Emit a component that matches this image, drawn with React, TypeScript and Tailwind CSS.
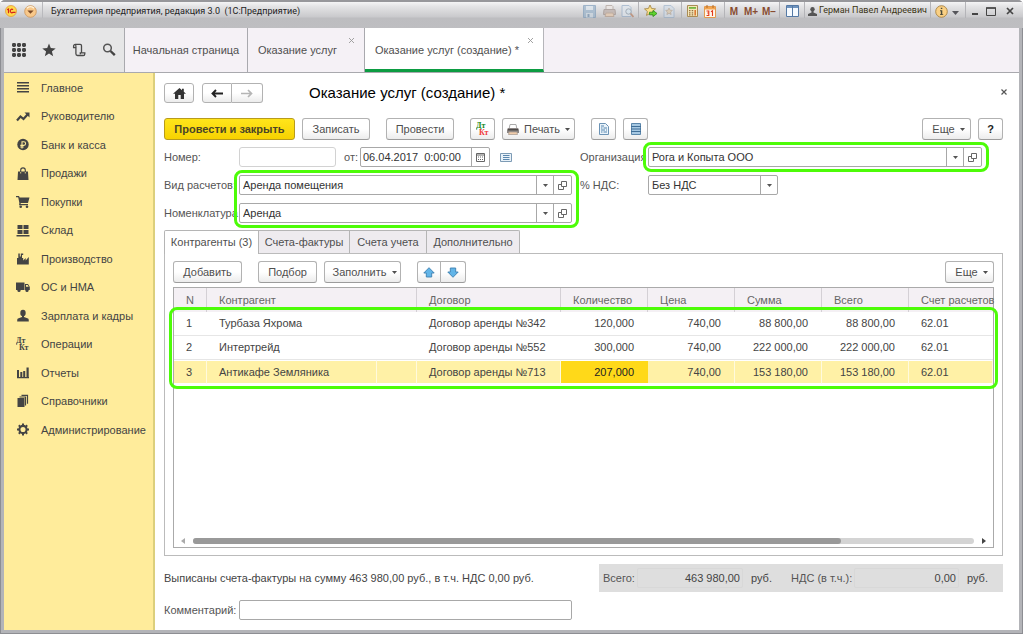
import type { ReactNode } from "react";

function Caret({ className = "" }: { className?: string }) {
  return (
    <svg className={className} width="5" height="3" viewBox="0 0 5 3" fill="currentColor" aria-hidden="true">
      <path d="M0 0h5L2.5 3z" />
    </svg>
  );
}

function Sep() {
  return <span className="mx-[3px] h-4 w-px shrink-0 self-start bg-[#b4b4b8]" />;
}

function TitleButton({ label, width, children }: { label: string; width: string; children: ReactNode }) {
  return (
    <button type="button" aria-label={label} className={`flex h-[18px] shrink-0 items-center justify-center ${width}`}>
      {children}
    </button>
  );
}

const titleFont = "font-[Roboto,sans-serif] text-[9px]";

function TitleBar() {
  return (
    <header className="flex h-7 items-start border-t-2 border-[#97979b] bg-[linear-gradient(to_bottom,#f4f4f5_0px,#e2e2e4_5px,#c9c9cc_15px,#bdbdc0_16px,#bebec1_26px)] pl-1 text-[#222]">
      <TitleButton label="1С" width="w-[14px]">
        <svg width="12" height="12" viewBox="0 0 12 12">
          <circle cx="6" cy="6" r="5.5" fill="#ffd94a" stroke="#e39a3c" strokeWidth="0.8" />
          <path d="M2.2 4.8 3.5 4v4.3M8 4.7A1.7 1.7 0 1 0 8 7.3h2.5" fill="none" stroke="#d4231c" strokeWidth="1.2" />
        </svg>
      </TitleButton>
      <TitleButton label="Главное меню" width="w-[24px]">
        <svg width="13" height="13" viewBox="0 0 13 13">
          <circle cx="6.5" cy="6.5" r="5.8" fill="#f8c88a" stroke="#cf9a62" strokeWidth="0.9" />
          <path d="M3 3.2a5 5 0 0 1 7 0" stroke="#fff3dc" strokeWidth="1.6" fill="none" />
          <path d="M3.4 5.4h6.2L6.5 8.8z" fill="#7a4a28" />
        </svg>
      </TitleButton>
      <span className="h-4 w-px bg-[#b9b9bd]" />
      <span className={`ml-2 whitespace-pre leading-[18px] ${titleFont}`}>Бухгалтерия предприятия, редакция 3.0  (1С:Предприятие)</span>
      <div className="ml-auto flex items-start">
        <TitleButton label="Сохранить" width="w-[20px]">
          <svg width="13" height="13" viewBox="0 0 13 13" opacity="0.6">
            <path d="M.5.5h12v12h-12z" fill="#8eacc8" stroke="#7093b5" />
            <path d="M3 1h7v4H3z" fill="#dbe6ef" />
            <path d="M3 8h7v4.500H3z" fill="#c8d6e2" />
            <path d="M4.500 9h2v3h-2z" fill="#6587a8" />
          </svg>
        </TitleButton>
        <TitleButton label="Печать" width="w-[20px]">
          <svg width="13" height="12" viewBox="0 0 13 12" opacity="0.65">
            <path d="M3 .5h6l1 1V5H3z" fill="#eee7e2" stroke="#a99b93" />
            <path d="M1 4.500h11l.5 5H.5z" fill="#b9aaa4" stroke="#998a84" />
            <path d="M3 8h7l1 3.500H2z" fill="#e7c6a8" stroke="#b39884" />
          </svg>
        </TitleButton>
        <TitleButton label="Просмотр" width="w-[16px]">
          <svg width="13" height="13" viewBox="0 0 13 13" opacity="0.6">
            <path d="M1 .5h7l2 2v9H1z" fill="#dfe7ef" stroke="#8ba6c4" />
            <circle cx="7.500" cy="6.500" r="2.700" fill="#d5e6f2" stroke="#7f90a0" />
            <path d="m9.500 8.500 3 3.500" stroke="#b2714d" strokeWidth="1.800" />
          </svg>
        </TitleButton>
        <Sep />
        <TitleButton label="Добавить в избранное" width="w-[18px]">
          <svg width="14" height="14" viewBox="0 0 14 14">
            <path d="m6 1 1.600 3.500 3.900.4-2.900 2.600.9 3.900L6 9.400l-3.500 2 .9-3.900L.5 4.900l3.900-.4z" fill="#fbe08a" stroke="#a88b4c" strokeWidth="0.900" />
            <path d="M5.500 8.200h3.500V6.400L13 9.500 9 12.600v-1.800H5.500z" fill="#5fd32e" stroke="#2c8a19" strokeWidth="0.800" />
          </svg>
        </TitleButton>
        <TitleButton label="Избранное" width="w-[18px]">
          <svg width="12" height="13" viewBox="0 0 12 13" opacity="0.55">
            <path d="M1 .5h7l3 3v9H1z" fill="#cfdbe7" stroke="#8ba6c4" />
            <path d="m6 3 1 2.200 2.400.2-1.800 1.700.5 2.400L6 8.300 3.900 9.500l.5-2.400L2.600 5.400 5 5.200z" fill="#d7c09a" stroke="#9a836a" strokeWidth="0.700" />
          </svg>
        </TitleButton>
        <Sep />
        <TitleButton label="Калькулятор" width="w-[14px]">
          <svg width="11" height="12" viewBox="0 0 11 12">
            <path d="M.5.5h10v11H.5z" fill="#f6e6b8" stroke="#a98c55" />
            <path d="M2 2h7v1.800H2z" fill="#74b843" />
            <path d="M2 5h1.500v1.300H2zm2.700 0h1.500v1.300H4.700zM2 7.200h1.500v1.300H2zm2.700 0h1.500v1.300H4.700zM2 9.300h1.500v1.200H2zm2.700 0h1.500v1.200H4.700z" fill="#93703f" />
            <path d="M7.400 5H9v5.500H7.400z" fill="#db7a35" />
          </svg>
        </TitleButton>
        <TitleButton label="Календарь" width="w-[22px]">
          <svg width="12" height="13" viewBox="0 0 12 13">
            <path d="M.5 1.500h11v11H.5z" fill="#fff6e8" stroke="#e29a4e" />
            <path d="M1 2h10v2.500H1z" fill="#f2a550" />
            <path d="M3 0v3M9 0v3" stroke="#b66a20" />
            <path d="M2.500 6h2.300v2H3.300h1.500v2.500H2.500M7 6.700l1.500-.9v5.200" fill="none" stroke="#e23b1d" strokeWidth="1.100" />
          </svg>
        </TitleButton>
        <Sep />
        <button type="button" className="h-[18px] w-[12px] text-[10px] font-bold text-[#884c30]">M</button>
        <button type="button" className="h-[18px] w-[22px] text-[10px] font-bold text-[#884c30]">M+</button>
        <button type="button" className="h-[18px] w-[14px] text-[10px] font-bold text-[#884c30]">M−</button>
        <Sep />
        <TitleButton label="Окна" width="w-[18px]">
          <svg width="13" height="12" viewBox="0 0 13 12">
            <path d="M.5.5h12v11H.5z" fill="#f5faff" stroke="#5479a5" />
            <path d="M1 1h11v2H1z" fill="#6f93bd" />
            <path d="M6.500 1v10.500" stroke="#5479a5" />
          </svg>
        </TitleButton>
        <Sep />
        <button type="button" className={`flex h-[18px] items-center gap-[2px] whitespace-nowrap text-[#3b3414] ${titleFont}`}>
          <svg width="9" height="9" viewBox="0 0 9 9" fill="#555">
            <circle cx="4.500" cy="2.300" r="2.200" />
            <path d="M3.500 4h2v1.500L9 7v2H0V7l3.500-1.500z" />
          </svg>
          Герман Павел Андреевич
        </button>
        <Sep />
        <TitleButton label="Справка" width="w-[14px]">
          <svg width="13" height="13" viewBox="0 0 13 13">
            <circle cx="6.500" cy="6.500" r="5.800" fill="#fad084" stroke="#a8813e" strokeWidth="0.900" />
            <path d="M5.800 2.700h1.500v1.400H5.800zM5 5.200h2.300v4h.9v.9H5v-.9h.8v-3H5z" fill="#4b4b3a" />
          </svg>
        </TitleButton>
        <TitleButton label="Ещё команды" width="w-[14px]">
          <svg className="mt-1" width="7" height="4" viewBox="0 0 7 4" fill="#55555a"><path d="M0 0h7L3.500 4z" /></svg>
        </TitleButton>
        <Sep />
        <TitleButton label="Свернуть" width="w-[12px]">
          <svg width="9" height="10" viewBox="0 0 9 10"><path d="M1 8h6" stroke="#444" strokeWidth="2" /></svg>
        </TitleButton>
        <TitleButton label="Развернуть" width="w-[20px]">
          <svg width="10" height="9" viewBox="0 0 10 9"><path d="M.5 1h9v7.500h-9z" fill="none" stroke="#444" /><path d="M0 1h10" stroke="#444" strokeWidth="1.500" /></svg>
        </TitleButton>
        <TitleButton label="Закрыть окно" width="w-[22px]">
          <svg className="mr-1" width="8" height="8" viewBox="0 0 8 8"><path d="m1 1 6 6M7 1 1 7" stroke="#444" strokeWidth="1.700" /></svg>
        </TitleButton>
      </div>
    </header>
  );
}

function Tool({ label, children }: { label: string; children: ReactNode }) {
  return (
    <button type="button" aria-label={label} className="flex h-full w-[30px] items-center justify-center">
      <svg width="14" height="14" viewBox="0 0 14 14" fill="#444" aria-hidden="true">{children}</svg>
    </button>
  );
}

function WindowTabs() {
  return (
    <div className="flex h-[45px] border-b border-[#a9a9ae] bg-[#f5f1f6]">
      <div className="flex h-full w-[120px] bg-[#e6e6e7]">
        <Tool label="Разделы">
          {[2, 7, 12].map((y) => [2, 7, 12].map((x) => <rect key={`${x}-${y}`} x={x - 2} y={y - 2} width="4" height="4" rx="1.4" />))}
        </Tool>
        <Tool label="Избранное">
          <path d="m7 .5 1.800 4.600 4.900.3-3.800 3.100 1.300 4.800L7 10.600l-4.200 2.700 1.300-4.800L.3 5.400l4.900-.3z" />
        </Tool>
        <Tool label="История">
          <path d="M4 4.600H1.600V3.200c0-1.200.7-1.800 1.700-1.800h4.900c.9 0 1.300.6 1.300 1.400v7M3.900 4.600v6.200c0 1.100.6 1.700 1.600 1.700h5.700c1 0 1.600-.6 1.600-1.600v-1H8.300v1.300M3.300 1.500c.6.300.7 1.200.7 3.100" fill="none" stroke="#4a4a4a" strokeWidth="1.300" />
        </Tool>
        <Tool label="Поиск">
          <circle cx="5.500" cy="5" r="3.800" fill="none" stroke="#555" strokeWidth="1.500" />
          <path d="m8.500 8 4.300 4.200" stroke="#444" strokeWidth="2.400" />
        </Tool>
      </div>
      <button type="button" className="w-[124px] border-x border-[#a9a9ae] text-[11px] text-[#4f4f4f]">Начальная страница</button>
      <div className="relative flex w-[117px] border-r border-[#a9a9ae]">
        <button type="button" className="grow pl-[10px] text-left text-[11px] text-[#4f4f4f]">Оказание услуг</button>
        <CloseMark />
      </div>
      <div className="relative flex w-[179px] border-r border-[#b5b5b9] border-b-[3px] border-b-[#0c9c42] bg-white">
        <button type="button" className="grow pl-[10px] pt-[3px] text-left text-[11px] text-[#4f4f4f]">Оказание услуг (создание) *</button>
        <CloseMark />
      </div>
    </div>
  );
}

function CloseMark() {
  return (
    <button type="button" aria-label="Закрыть вкладку" className="absolute right-[9px] top-[9px] p-px">
      <svg width="5" height="5" viewBox="0 0 5 5"><path d="m0 0 5 5M5 0 0 5" stroke="#999" strokeWidth="0.900" /></svg>
    </button>
  );
}

const sections: { name: string; icon: ReactNode }[] = [
  { name: "Главное", icon: <path d="M1 1h12v1.500H1zm0 3h12v1.500H1zm0 3h12v1.500H1zm0 3h12v1.500H1z" /> },
  { name: "Руководителю", icon: <><path d="m1 10.500 3.500-4 3 2.500 4-4.500" fill="none" stroke="#444" strokeWidth="2.200" /><path d="M8.500 2.500h5v5z" /></> },
  {
    name: "Банк и касса",
    icon: <><circle cx="7" cy="6.500" r="5.700" /><path d="M6 10.500V3.800h1.800a1.700 1.700 0 0 1 0 3.600H4.300M4.300 9h3.400" fill="none" stroke="#ffec9b" strokeWidth="1.100" /></>,
  },
  { name: "Продажи", icon: <><path d="M2 4.500h10l.5 8.500h-11z" /><path d="M4.700 6V3.200a2.300 2.300 0 0 1 4.600 0V6" fill="none" stroke="#444" strokeWidth="1.100" /><path d="M4.700 5v1.500M9.300 5v1.500" stroke="#ffec9b" strokeWidth="0.800" /></> },
  { name: "Покупки", icon: <><path d="M0 1h3l.7 1.500h9.800L12 8H4.800l-.3 1H12v1.300H3L3.400 8 2.200 2.300H0z" /><circle cx="4.700" cy="11.700" r="1.300" /><circle cx="11" cy="11.700" r="1.300" /></> },
  { name: "Склад", icon: <path d="M1.500 1h5v4h-5zm6 0h5v4h-5zm-6 5h5v4h-5zm6 0h5v4h-5zM.5 11h13v1.500H.5z" /> },
  { name: "Производство", icon: <path d="M1 12.500V6h1.300V1.500h1.500v3h1v-3h2.400V3H6v3h1.200v2.500L9.700 6v2.500L12.800 5v7.500z" /> },
  { name: "ОС и НМА", icon: <><path d="M0 2.500h8.500V10H0zM9 4h3l1.800 3v3H9z" /><path d="M10 5h1.700l1 1.800H10z" fill="#ffec9b" /><circle cx="3" cy="10.500" r="1.600" /><circle cx="11" cy="10.500" r="1.600" /></> },
  { name: "Зарплата и кадры", icon: <><ellipse cx="7" cy="4" rx="2.700" ry="3.200" /><path d="M6 6h2v2l4 1.500c.6.300.8 1 .8 3H1.200c0-2 .2-2.700.8-3L6 8z" /></> },
  {
    name: "Операции",
    icon: <><text x="0" y="6" fontSize="8" fontWeight="bold" fontFamily="Liberation Serif, serif">Дт</text><text x="3" y="13" fontSize="8" fontWeight="bold" fontFamily="Liberation Serif, serif">Кт</text></>,
  },
  { name: "Отчеты", icon: <path d="M1 4h2v7H1zm3.300 2h2v5h-2zm2.900-1h2v6h-2zM10.500 1.500h2.200V11h-2.200zM1 11h12v1.200H1z" /> },
  { name: "Справочники", icon: <><path d="M1.500 4h7v9h-7z" /><path d="M3.500 3h6v8.500M5.500 1.300h6v8.500" fill="none" stroke="#444" strokeWidth="1.200" /></> },
  {
    name: "Администрирование",
    icon: <><circle cx="7" cy="6.500" r="3.600" fill="none" stroke="#444" strokeWidth="2.100" /><path d="M7 .5v2M7 10.500v2M1 6.500h2M11 6.500h2M2.800 2.300l1.300 1.300M9.900 9.400l1.300 1.300M11.200 2.300 9.900 3.600M4.100 9.400l-1.300 1.300" stroke="#444" strokeWidth="2" /></>,
  },
];

function Sidebar() {
  return (
    <nav className="w-[151px] shrink-0 border-r-2 border-[#dccf7c] bg-[#ffec9b] pt-px">
      <ul className="grid h-[370px] auto-rows-fr">
        {sections.map((s) => (
          <li key={s.name} className="flex">
            <a href="#" className="flex grow items-center gap-[11px] whitespace-nowrap pl-[12px] text-[11px] text-[#444]">
              <svg width="14" height="14" viewBox="0 0 14 14" fill="#444" aria-hidden="true">{s.icon}</svg>
              {s.name}
            </a>
          </li>
        ))}
      </ul>
    </nav>
  );
}

const face = "flex items-center justify-center border border-[#b2b2b2] bg-linear-to-b from-white from-50% to-[#ececec] text-[11px] text-[#4f4f4f] whitespace-nowrap";

function Btn({ className = "", label, children }: { className?: string; label?: string; children: ReactNode }) {
  return (
    <button type="button" aria-label={label} className={`${face} h-[22px] shrink-0 rounded-[3px] border-b-[#9c9c9c] ${className}`}>
      {children}
    </button>
  );
}

const field = "h-5 min-w-0 rounded-[2px] border border-[#a8a8a8] bg-white text-[11px] text-[#333]";
const cap = "text-[11px] text-[#555] whitespace-nowrap";

function OpenIcon() {
  return (
    <svg width="9" height="9" viewBox="0 0 9 9" fill="none" stroke="#666" aria-hidden="true">
      <path d="M3.500.5h5v5h-5z" />
      <path d="M3.500 3.500h-3v5h5v-3" />
    </svg>
  );
}

function Combo({ id, value }: { id: string; value: string }) {
  return (
    <div className={`${field} flex overflow-hidden`}>
      <input id={id} defaultValue={value} className="min-w-0 grow px-[3px] outline-none" />
      <button type="button" aria-label="Выбрать" className="flex w-[17px] shrink-0 items-center justify-center border-l border-[#a8a8a8] text-[#555]"><Caret /></button>
      <button type="button" aria-label="Открыть" className="flex w-[18px] shrink-0 items-center justify-center border-l border-[#a8a8a8]"><OpenIcon /></button>
    </div>
  );
}

const frame = "pointer-events-none z-10 rounded-[8px] border-[3px] border-[#4dfc08]";

function HeaderForm() {
  return (
    <div className="mt-[7px] flex items-start gap-2">
      <div className="grid w-[408px] shrink-0 grid-cols-[75px_1fr] items-center gap-y-2">
        <label htmlFor="num" className={cap}>Номер:</label>
        <div className="flex items-center">
          <input id="num" className="h-5 w-[97px] rounded-[3px] border border-[#d2d2d2] bg-white px-1 text-[11px]" />
          <label htmlFor="date" className={`${cap} ml-2 w-4`}>от:</label>
          <div className={`${field} flex w-[130px]`}>
            <input id="date" defaultValue="06.04.2017  0:00:00" className="min-w-0 grow px-[2px] outline-none" />
            <button type="button" aria-label="Календарь" className="flex w-[18px] shrink-0 items-center justify-center border-l border-[#a8a8a8]">
              <svg width="9" height="9" viewBox="0 0 9 9" fill="none" stroke="#666">
                <path d="M.5.5h8v8h-8zM.5 2h8" />
                <path d="M2 4h1M4 4h1M6 4h1M2 6.500h1M4 6.500h1M6 6.500h1" />
              </svg>
            </button>
          </div>
          <button type="button" aria-label="Список" className="ml-[10px]">
            <svg width="12" height="9" viewBox="0 0 12 9">
              <path d="M.5.5h11v8H.5z" fill="#e9f2f9" stroke="#7d9bb5" />
              <path d="M3 2.500h6.500M3 4.500h6.500M3 6.500h6.500" stroke="#5b87ae" />
            </svg>
          </button>
        </div>
        <label htmlFor="kind" className={cap}>Вид расчетов:</label>
        <div className="col-start-2 row-start-2"><Combo id="kind" value="Аренда помещения" /></div>
        <label htmlFor="item" className={cap}>Номенклатура</label>
        <div className="col-start-2 row-start-3"><Combo id="item" value="Аренда" /></div>
        <div className={`${frame} col-start-2 row-span-2 row-start-2 -my-[5px] -ml-[5px] -mr-[7px] self-stretch`} />
      </div>
      <div className="mr-[21px] grid grow grid-cols-[68px_1fr] items-center gap-y-2">
        <label htmlFor="org" className={cap}>Организация</label>
        <div className="col-start-2 row-start-1"><Combo id="org" value="Рога и Копыта ООО" /></div>
        <div className={`${frame} col-start-2 row-start-1 -my-[5px] -ml-[5px] -mr-[7px] self-stretch`} />
        <label htmlFor="vat" className={cap}>% НДС:</label>
        <div className="relative w-[130px]">
          <select id="vat" className={`${field} block w-full appearance-none px-[3px]`}>
            <option>Без НДС</option>
          </select>
          <span className="pointer-events-none absolute inset-y-px right-px flex w-[17px] items-center justify-center border-l border-[#a8a8a8] text-[#555]"><Caret /></span>
        </div>
      </div>
    </div>
  );
}

const rows = [
  { n: 1, who: "Турбаза Яхрома", deal: "Договор аренды №342", qty: "120,000", price: "740,00", sum: "88 800,00" },
  { n: 2, who: "Интертрейд", deal: "Договор аренды №552", qty: "300,000", price: "740,00", sum: "222 000,00" },
  { n: 3, who: "Антикафе Земляника", deal: "Договор аренды №713", qty: "207,000", price: "740,00", sum: "153 180,00" },
];

function Goods() {
  const head = "h-6 border-r border-[#d4d0d5] pl-3 text-left font-normal text-[#666] last:border-r-0";
  return (
    <div className="relative mt-1 flex grow flex-col border border-[#aaa]">
      <table className="w-full table-fixed border-separate border-spacing-0 whitespace-nowrap text-[11px] text-[#444]">
        <colgroup>
          <col className="w-[33px]" />
          <col className="w-[170px]" />
          <col className="w-[40px]" />
          <col className="w-[144px]" />
          <col className="w-[87px]" />
          <col className="w-[87px]" />
          <col className="w-[87px]" />
          <col className="w-[87px]" />
          <col />
        </colgroup>
        <thead className="bg-[#f4f0f4]">
          <tr>
            <th className={head}>N</th>
            <th className={head} colSpan={2}>Контрагент</th>
            {["Договор", "Количество", "Цена", "Сумма", "Всего", "Счет расчетов"].map((t) => (
              <th key={t} className={head}>{t}</th>
            ))}
          </tr>
        </thead>
        <tbody>
          {rows.map((r) => {
            const active = r.n === 3;
            const cell = active
              ? "h-6 border-r border-b border-t border-r-[#fffadd] border-y-white bg-[#fff1a6]"
              : "h-6 border-b border-[#e6e6e6]";
            return (
              <tr key={r.n}>
                <td className={`${cell} pl-3`}>{r.n}</td>
                <td className={`${cell} pl-3`} colSpan={active ? 1 : 2}>{r.who}</td>
                {active && <td className={cell} />}
                <td className={`${cell} pl-3`}>{r.deal}</td>
                <td className={active ? "h-6 border-y border-white bg-[#ffd919] pr-[14px] text-right text-[#222]" : `${cell} pr-[14px] text-right`}>{r.qty}</td>
                <td className={`${cell} ${active ? "pr-[13px]" : "pr-[14px]"} text-right`}>{r.price}</td>
                <td className={`${cell} ${active ? "pr-[13px]" : "pr-[14px]"} text-right`}>{r.sum}</td>
                <td className={`${cell} ${active ? "pr-[13px]" : "pr-[14px]"} text-right`}>{r.sum}</td>
                <td className={`${cell} pl-3`}>62.01</td>
              </tr>
            );
          })}
        </tbody>
      </table>
      <div className={`${frame} absolute -left-[5px] -right-[5px] top-[19px] h-[82px]`} />
      <div className="mt-auto flex h-[13px] items-center gap-2 px-[7px]">
        <svg width="4" height="6" viewBox="0 0 4 6" fill="#aaa"><path d="M4 0v6L0 3z" /></svg>
        <div className="h-[6px] grow rounded-full bg-[#d4d4d4]">
          <div className="h-full w-[83%] rounded-full bg-[#999]" />
        </div>
        <svg width="4" height="6" viewBox="0 0 4 6" fill="#444"><path d="M0 0v6l4-3z" /></svg>
      </div>
    </div>
  );
}

function Arrow({ down = false }: { down?: boolean }) {
  return (
    <svg className={down ? "rotate-180" : ""} width="12" height="11" viewBox="0 0 12 11" aria-hidden="true">
      <path d="M6 .7 11.200 6H8.700v4H3.300V6H.8z" fill="#62b5e8" stroke="#3c7fb0" strokeWidth="0.900" />
    </svg>
  );
}

export default function App() {
  const tab = "h-[23px] border border-b-0 border-l-0 border-[#b5b5b5] bg-[#eeebef]";
  return (
    <div className="flex min-h-screen flex-col overflow-hidden rounded-t-[5px] bg-[#b3b4b8] font-['Liberation_Sans',Arial,sans-serif]">
      <TitleBar />
      <div className="flex grow flex-col border-b border-l border-r border-[#8d8e93] pb-[3px] pl-[3px] pr-[3px]">
        <WindowTabs />
        <div className="flex grow bg-white">
          <Sidebar />
          <main className="flex min-w-0 grow flex-col pb-[10px] pl-[9px] pr-4 pt-[10px]">
            <div className="flex h-5 items-center">
              <button type="button" aria-label="Домой" className={`${face} h-5 w-[30px] rounded-[3px]`}>
                <svg width="13" height="11" viewBox="0 0 13 11" fill="#333"><path d="M6.500 0 0 5.800h2V11h3.300V7h2.400v4H11V5.800h2L10.800 3.800V.8H9v1.400z" /></svg>
              </button>
              <div className="ml-2 flex">
                <button type="button" aria-label="Назад" className={`${face} h-5 w-[30px] rounded-l-[3px]`}>
                  <svg width="12" height="9" viewBox="0 0 12 9" fill="none" stroke="#222" strokeWidth="1.900"><path d="M12 4.500H2M5 1 1.500 4.500 5 8" /></svg>
                </button>
                <button type="button" aria-label="Вперёд" className={`${face} h-5 w-[31px] rounded-r-[3px] border-l-0`}>
                  <svg width="12" height="9" viewBox="0 0 12 9" fill="none" stroke="#b5b5b5" strokeWidth="1.700"><path d="M0 4.500h10M7 1l3.500 3.500L7 8" /></svg>
                </button>
              </div>
              <h1 className="ml-[46px] whitespace-nowrap text-[15px] text-black">Оказание услуг (создание) *</h1>
              <button type="button" aria-label="Закрыть" className="-mr-[5px] mb-[3px] ml-auto p-px">
                <svg width="6" height="6" viewBox="0 0 6 6"><path d="m.5.5 5 5M5.500.5l-5 5" stroke="#555" strokeWidth="1.200" /></svg>
              </button>
            </div>

            <div className="mt-[15px] flex items-center">
              <button type="button" className="h-[22px] w-[131px] whitespace-nowrap rounded-[3px] border border-[#b89b1c] bg-linear-to-b from-[#ffe51a] to-[#f7d200] text-[11px] font-bold text-[#4a4526]">Провести и закрыть</button>
              <Btn className="ml-[7px] w-[68px]">Записать</Btn>
              <Btn className="ml-4 w-[68px]">Провести</Btn>
              <Btn label="Дт Кт" className="ml-4 w-[25px]">
                <svg width="14" height="14" viewBox="0 0 14 14" fontFamily="Liberation Serif, serif" fontSize="8" fontWeight="bold" aria-hidden="true">
                  <text x="0" y="6" fill="#1b8a1b">Дт</text>
                  <text x="3" y="13" fill="#f03a3a">Кт</text>
                </svg>
              </Btn>
              <Btn className="ml-[7px] w-[73px] gap-[5px]">
                <svg width="12" height="11" viewBox="0 0 12 11" aria-hidden="true">
                  <path d="M3 .5h6l.8 4H2.200z" fill="#fff" stroke="#aaa" />
                  <path d="M1 4h10l1 1.500V9H0V5.500z" fill="#8d8785" />
                  <path d="M1 5h10v1.500H1z" fill="#4e4a49" />
                  <path d="M2 8h8l.5 2.500h-9z" fill="#f1cdab" stroke="#a3968c" strokeWidth="0.700" />
                </svg>
                Печать
                <Caret />
              </Btn>
              <Btn label="Отчет" className="ml-4 w-[25px]">
                <svg width="10" height="12" viewBox="0 0 10 12" aria-hidden="true">
                  <path d="M.5.5h6l3 3v8h-9z" fill="#eaf3fa" stroke="#6c93b5" />
                  <path d="M2 3h3M2 5h1.500M4.500 5H8M2 7h4M7 7h1M2 9h1.500M4.500 9H8" stroke="#5585ae" />
                </svg>
              </Btn>
              <Btn label="Список" className="ml-[7px] w-[25px]">
                <svg width="10" height="12" viewBox="0 0 10 12" aria-hidden="true">
                  <path d="M.5.5h9v11h-9z" fill="#a6c8e2" stroke="#5b86ab" />
                  <path d="M0 3.500h10M0 6h10M0 8.500h10" stroke="#406f98" />
                </svg>
              </Btn>
              <Btn className="ml-auto w-[49px] gap-[5px] pl-1">Еще <Caret /></Btn>
              <Btn label="Справка" className="ml-[7px] w-[25px] font-bold text-[#222]">?</Btn>
            </div>

            <HeaderForm />

            <div className="mt-[7px] flex text-[11px] text-[#4f4f4f]" role="tablist">
              <button type="button" role="tab" aria-selected="true" className="z-[1] -mb-px h-6 w-[95px] rounded-tl-[2px] border border-b-0 border-[#b5b5b5] bg-white">Контрагенты (3)</button>
              <button type="button" role="tab" className={`${tab} w-[91px]`}>Счета-фактуры</button>
              <button type="button" role="tab" className={`${tab} w-[77px]`}>Счета учета</button>
              <button type="button" role="tab" className={`${tab} w-[93px] rounded-tr-[2px]`}>Дополнительно</button>
            </div>
            <section className="flex min-h-[280px] grow flex-col border border-[#bbb] px-2 pb-[7px] pt-[7px]">
              <div className="flex">
                <Btn className="w-[69px]">Добавить</Btn>
                <Btn className="ml-4 w-[59px]">Подбор</Btn>
                <Btn className="ml-[7px] w-[77px] gap-[5px] pl-1">Заполнить <Caret /></Btn>
                <Btn label="Вверх" className="ml-4 w-[24px] rounded-r-none"><Arrow /></Btn>
                <Btn label="Вниз" className="w-[25px] rounded-l-none border-l-0"><Arrow down /></Btn>
                <Btn className="ml-auto w-[49px] gap-[5px] pl-1">Еще <Caret /></Btn>
              </div>
              <Goods />
            </section>

            <div className="mt-2 flex items-center text-[11px] text-[#444]">
              <p className="w-[435px] shrink-0 whitespace-nowrap">Выписаны счета-фактуры на сумму 463 980,00 руб., в т.ч. НДС 0,00 руб.</p>
              <div className="flex h-7 grow items-center whitespace-nowrap bg-[#dedede] pl-1">
                <label htmlFor="total" className="w-[34px] text-[#555]">Всего:</label>
                <input id="total" readOnly value="463 980,00" className="h-5 w-[106px] rounded-[2px] border border-[#d8d8d8] px-[2px] text-right" />
                <span className="ml-2 w-10">руб.</span>
                <label htmlFor="vatSum" className="w-[63px] text-[#555]">НДС (в т.ч.):</label>
                <input id="vatSum" readOnly value="0,00" className="h-5 w-[105px] rounded-[2px] border border-[#d8d8d8] px-[2px] text-right" />
                <span className="ml-2">руб.</span>
              </div>
            </div>
            <div className="mt-2 flex items-center">
              <label htmlFor="note" className={`${cap} w-[75px]`}>Комментарий:</label>
              <input id="note" className={`${field} w-[333px] px-1`} />
            </div>
          </main>
        </div>
      </div>
    </div>
  );
}
